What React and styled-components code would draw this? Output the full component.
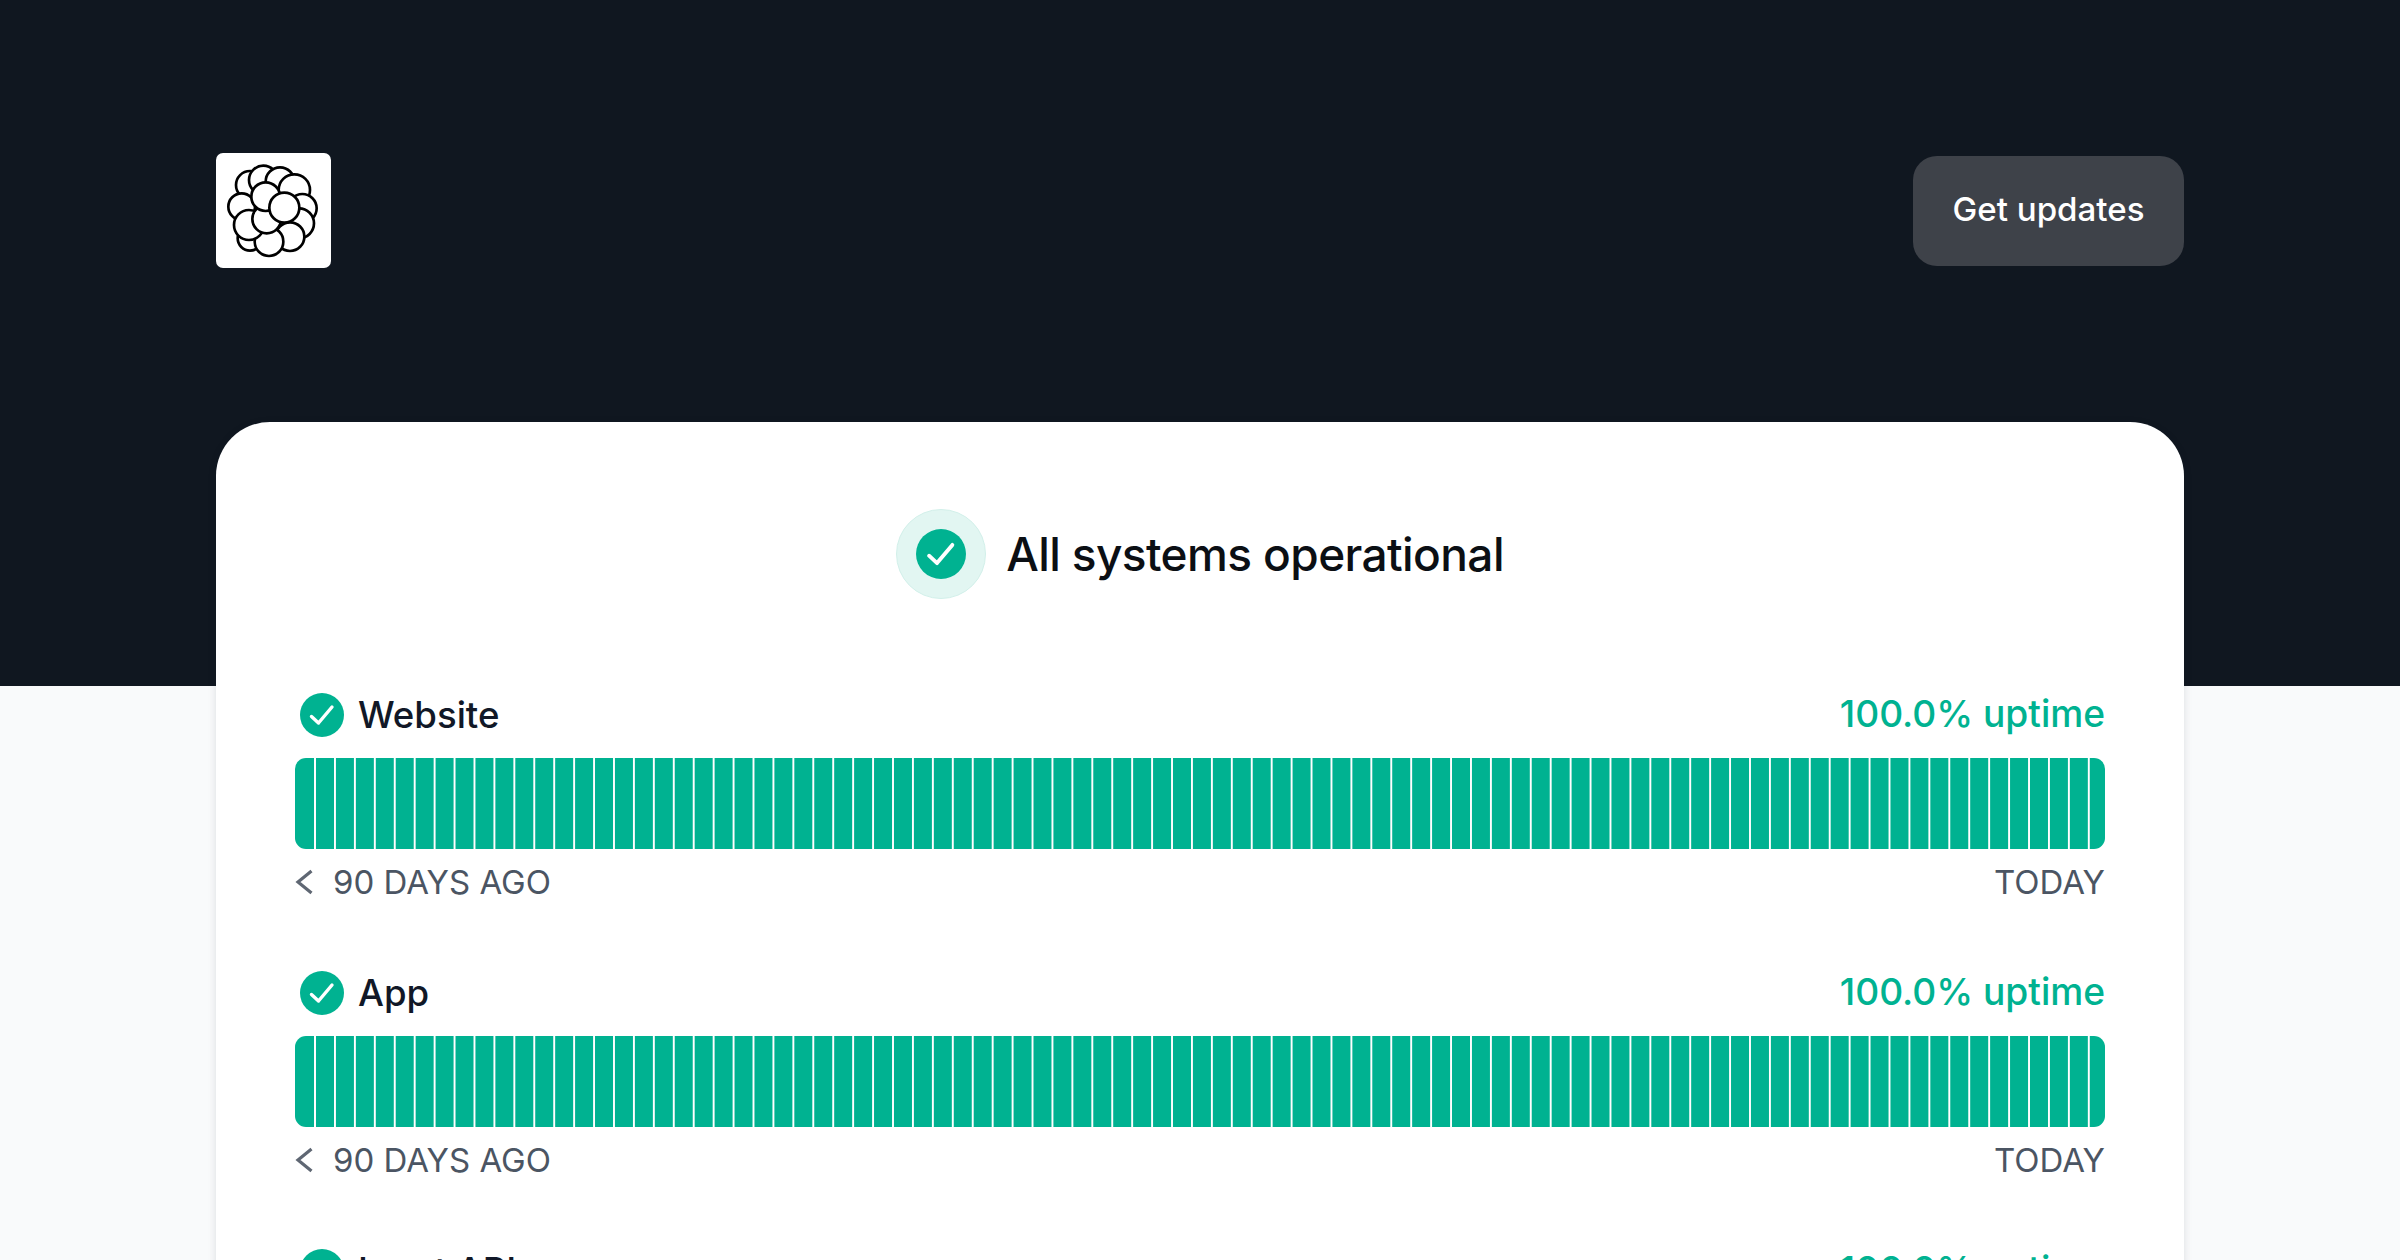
import styled, { createGlobalStyle } from "styled-components";

const GREEN = "#00b291";

const GlobalStyle = createGlobalStyle`
  html, body {
    margin: 0;
    height: 1260px;
    overflow: hidden;
    background: #f9fafb;
    font-family: "Inter", "Liberation Sans", sans-serif;
    -webkit-font-smoothing: antialiased;
  }
`;

const Hero = styled.div`
  background: #101720;
  height: 686px;
  margin-bottom: -264px;
`;

const Header = styled.header`
  width: 1968px;
  margin: 0 auto;
  padding-top: 153px;
  display: flex;
  justify-content: space-between;
  align-items: center;
`;

const Logo = styled.div`
  width: 115px;
  height: 115px;
  background: #fff;
  border-radius: 7px;
  display: flex;
  align-items: center;
  justify-content: center;
`;

const UpdatesButton = styled.button`
  width: 271px;
  height: 110px;
  padding: 0 0 3px;
  background: #3e4249;
  color: #fff;
  border: 0;
  border-radius: 24px;
  font: 450 33.1px "Inter", sans-serif;
`;

const Card = styled.main`
  position: relative;
  width: 1968px;
  box-sizing: border-box;
  margin: 0 auto;
  padding: 87px 79px 0;
  background: #fff;
  border-radius: 54px 54px 0 0;
  box-shadow: 0 2px 8px rgba(17, 24, 39, 0.12);
`;

const Banner = styled.div`
  display: flex;
  align-items: center;
  justify-content: center;
  gap: 20px;
  margin-bottom: 94px;
`;

const BannerRing = styled.div`
  width: 90px;
  height: 90px;
  box-sizing: border-box;
  border: 1px solid #d2f0ea;
  border-radius: 50%;
  background: #e2f6f2;
  display: flex;
  align-items: center;
  justify-content: center;
`;

const BannerTitle = styled.h1`
  margin: 0;
  font-size: 46px;
  line-height: 90px;
  letter-spacing: -0.6px;
  font-weight: 500;
  color: #0b0f14;
`;

const Service = styled.section`
  margin-bottom: 69px;
`;

const ServiceHead = styled.div`
  display: flex;
  align-items: center;
  justify-content: space-between;
  height: 44px;
  margin-bottom: 21px;
`;

const ServiceName = styled.div`
  display: flex;
  align-items: center;
  gap: 14px;
  padding-left: 5px;
  font-size: 36.6px;
  font-weight: 500;
  color: #111827;
`;

const Uptime = styled.div`
  padding-bottom: 3px;
  font-size: 37.2px;
  font-weight: 450;
  letter-spacing: -0.05px;
  color: ${GREEN};
`;

const BarChart = styled.svg`
  display: block;
  width: 1810px;
  height: 91px;
`;

const Foot = styled.div`
  display: flex;
  align-items: center;
  justify-content: space-between;
  margin-top: 13px;
  height: 40px;
  font-size: 33px;
  color: #4b5563;
`;

const FootLeft = styled.div`
  display: flex;
  align-items: center;
  gap: 18px;
`;

function CheckDot({ size }) {
  return (
    <svg width={size} height={size} viewBox="0 0 44 44">
      <circle cx="22" cy="22" r="22" fill={GREEN} />
      <path
        d="M11.5 23.5 L18.5 30 L32 14"
        fill="none"
        stroke="#fff"
        strokeWidth="3.4"
        strokeLinecap="round"
        strokeLinejoin="round"
      />
    </svg>
  );
}

// painted bottom to top, the overlap makes the spiral
const petals = [
  [75, 75, 42],
  [115, 60, 43],
  [165, 65, 43],
  [208, 90, 47],
  [232, 145, 43],
  [222, 190, 45],
  [195, 230, 43],
  [75, 235, 37],
  [132, 245, 43],
  [50, 140, 40],
  [72, 195, 45],
  [125, 177, 43],
  [122, 110, 43],
  [178, 143, 45],
];

function FlowerLogo() {
  return (
    <svg width="115" height="115" viewBox="-27 -21 345 345">
      {petals.map(([cx, cy, r], i) => (
        <circle key={i} cx={cx} cy={cy} r={r} fill="#fff" stroke="#000" strokeWidth="8" />
      ))}
    </svg>
  );
}

function UptimeBars() {
  const period = 19.93;
  const bars = [];
  for (let i = 0; i < 91; i++) {
    const x = i === 0 ? 0 : 21 + (i - 1) * period;
    const w = i === 0 ? 19 : i === 90 ? 1810 - x : 18;
    bars.push(<rect key={i} x={x} y="0" width={w} height="91" fill={GREEN} />);
  }
  return (
    <BarChart viewBox="0 0 1810 91">
      <clipPath id="barClip">
        <rect width="1810" height="91" rx="11" />
      </clipPath>
      <g clipPath="url(#barClip)">{bars}</g>
    </BarChart>
  );
}

const services = ["Website", "App", "Input API"];

export default function App() {
  return (
    <>
      <GlobalStyle />
      <Hero>
        <Header>
          <Logo>
            <FlowerLogo />
          </Logo>
          <UpdatesButton>Get updates</UpdatesButton>
        </Header>
      </Hero>
      <Card>
        <Banner>
          <BannerRing>
            <CheckDot size={50} />
          </BannerRing>
          <BannerTitle>All systems operational</BannerTitle>
        </Banner>
        {services.map((name) => (
          <Service key={name}>
            <ServiceHead>
              <ServiceName>
                <CheckDot size={44} />
                {name}
              </ServiceName>
              <Uptime>100.0% uptime</Uptime>
            </ServiceHead>
            <UptimeBars />
            <Foot>
              <FootLeft>
                <svg width="20" height="26" viewBox="0 0 20 26">
                  <path d="M16.5 2 L3 13 L16.5 24" fill="none" stroke="#5f6773" strokeWidth="3.2" />
                </svg>
                90 DAYS AGO
              </FootLeft>
              <div>TODAY</div>
            </Foot>
          </Service>
        ))}
      </Card>
    </>
  );
}
